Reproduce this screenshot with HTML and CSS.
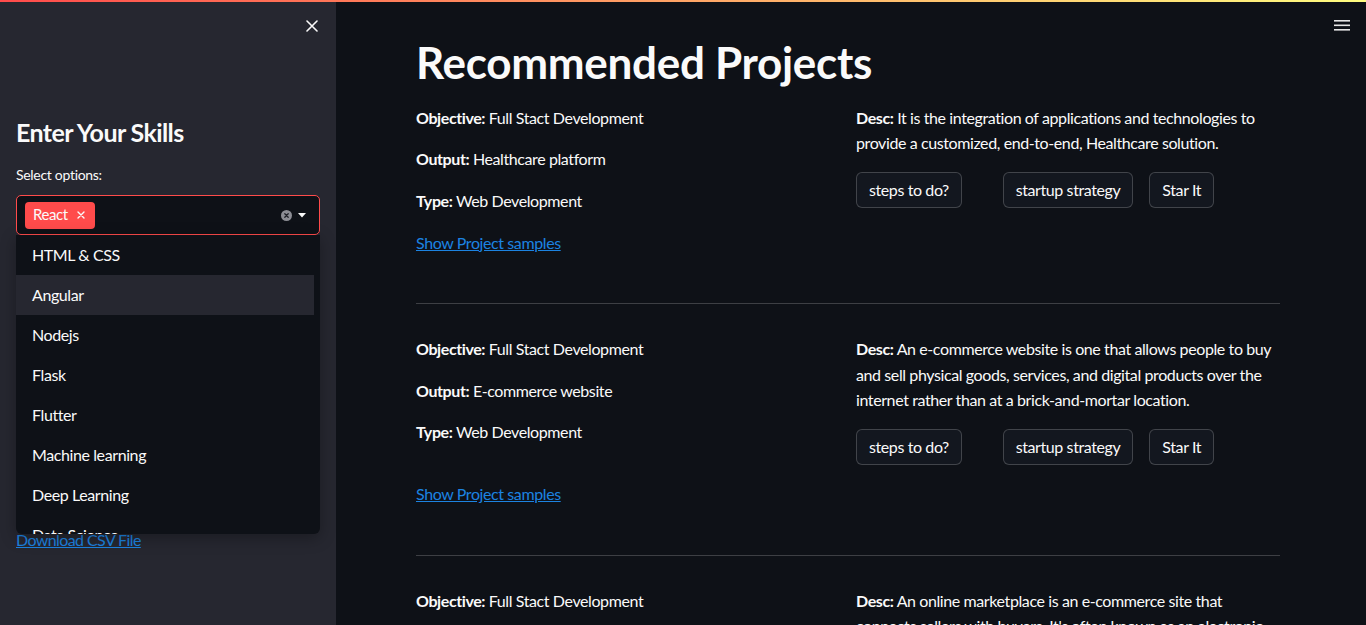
FILE: index.html
```html
<!DOCTYPE html>
<html lang="en">
<head>
<meta charset="utf-8">
<title>Recommended Projects</title>
<link rel="stylesheet" href="styles.css">
</head>
<body>
<div class="topbar"></div>
<div class="app">
  <aside class="sidebar">
    <div class="sb-header">
      <button class="icon-btn" aria-label="Close sidebar">
        <svg width="12" height="12" viewBox="0 0 12 12"><path d="M1 1L11 11M11 1L1 11" stroke="#fafafa" stroke-width="1.6" stroke-linecap="round"/></svg>
      </button>
    </div>
    <div class="sb-body">
      <h2 class="sb-title">Enter Your Skills</h2>
      <div class="field-label">Select options:</div>
      <div class="multiselect">
        <div class="ms-box">
          <span class="tag">React
            <svg width="8" height="8" viewBox="0 0 8 8"><path d="M1 1L7 7M7 1L1 7" stroke="#fafafa" stroke-width="1.4" stroke-linecap="round"/></svg>
          </span>
          <span class="ms-spacer"></span>
          <span class="ms-clear">
            <svg width="11" height="11" viewBox="0 0 11 11"><circle cx="5.5" cy="5.5" r="5.5" fill="#8c8d94"/><path d="M3.8 3.8L7.2 7.2M7.2 3.8L3.8 7.2" stroke="#1e2027" stroke-width="1.3" stroke-linecap="round"/></svg>
          </span>
          <span class="ms-arrow">
            <svg width="8" height="5" viewBox="0 0 8 5"><path d="M0 0H8L4 4.5Z" fill="#fafafa"/></svg>
          </span>
        </div>
        <ul class="ms-menu">
          <li>HTML &amp; CSS</li>
          <li class="active">Angular</li>
          <li>Nodejs</li>
          <li>Flask</li>
          <li>Flutter</li>
          <li>Machine learning</li>
          <li>Deep Learning</li>
          <li>Data Science</li>
          <li>Android</li>
        </ul>
      </div>
      <a class="dl-link" href="#">Download CSV File</a>
    </div>
  </aside>

  <main class="main">
    <button class="menu-btn" aria-label="Menu">
      <svg width="16" height="11" viewBox="0 0 16 11"><rect x="0" y="0" width="16" height="1.6" fill="#e6e6e6"/><rect x="0" y="4.5" width="16" height="1.6" fill="#e6e6e6"/><rect x="0" y="9" width="16" height="1.6" fill="#e6e6e6"/></svg>
    </button>
    <div class="content">
      <h1 class="title">Recommended Projects</h1>

      <section class="project">
        <div class="row">
          <div class="col">
            <p><b>Objective:</b> Full Stact Development</p>
            <p><b>Output:</b> Healthcare platform</p>
            <p><b>Type:</b> Web Development</p>
          </div>
          <div class="col">
            <p><b>Desc:</b> It is the integration of applications and technologies to provide a customized, end-to-end, Healthcare solution.</p>
            <div class="btns">
              <button class="btn">steps to do?</button>
              <button class="btn">startup strategy</button>
              <button class="btn">Star It</button>
            </div>
          </div>
        </div>
        <p class="samples"><a href="#">Show Project samples</a></p>
      </section>
      <hr class="divider">

      <section class="project">
        <div class="row">
          <div class="col">
            <p><b>Objective:</b> Full Stact Development</p>
            <p><b>Output:</b> E-commerce website</p>
            <p><b>Type:</b> Web Development</p>
          </div>
          <div class="col">
            <p><b>Desc:</b> An e-commerce website is one that allows people to buy and sell physical goods, services, and digital products over the internet rather than at a brick-and-mortar location.</p>
            <div class="btns">
              <button class="btn">steps to do?</button>
              <button class="btn">startup strategy</button>
              <button class="btn">Star It</button>
            </div>
          </div>
        </div>
        <p class="samples"><a href="#">Show Project samples</a></p>
      </section>
      <hr class="divider">

      <section class="project">
        <div class="row">
          <div class="col">
            <p><b>Objective:</b> Full Stact Development</p>
            <p><b>Output:</b> Online marketplace</p>
            <p><b>Type:</b> Web Development</p>
          </div>
          <div class="col">
            <p><b>Desc:</b> An online marketplace is an e-commerce site that connects sellers with buyers. It's often known as an electronic marketplace.</p>
            <div class="btns">
              <button class="btn">steps to do?</button>
              <button class="btn">startup strategy</button>
              <button class="btn">Star It</button>
            </div>
          </div>
        </div>
        <p class="samples"><a href="#">Show Project samples</a></p>
      </section>
    </div>
  </main>
</div>
</body>
</html>
```

FILE: styles.css
```css
* { box-sizing: border-box; }

html, body {
  margin: 0;
  height: 100%;
  overflow: hidden;
}

body {
  background: #0e1117;
  color: #fafafa;
  font-family: Lato, "Noto Sans", sans-serif;
  font-size: 16px;
  line-height: 25.6px;
  letter-spacing: -0.4px;
}

.topbar {
  height: 2px;
  background: linear-gradient(90deg, #ff4b4b, #fffd80);
}

.app {
  display: flex;
  height: calc(100% - 2px);
}

/* Sidebar */
.sidebar {
  width: 336px;
  flex: none;
  background: #262730;
  overflow: hidden;
}

.sb-header {
  display: flex;
  justify-content: flex-end;
  padding: 18px 18px 0 0;
}

.icon-btn {
  background: none;
  border: 0;
  padding: 0;
  display: block;
  line-height: 0;
}

.sb-body {
  padding: 85px 16px 0;
}

.sb-title {
  margin: 0;
  font-size: 25px;
  line-height: 30px;
  font-weight: 700;
  letter-spacing: -0.6px;
}

.field-label {
  margin-top: 17px;
  font-size: 14px;
  line-height: 22px;
  letter-spacing: -0.3px;
}

.multiselect {
  position: relative;
  margin-top: 9px;
}

.ms-box {
  height: 40px;
  border: 1px solid #ff4b4b;
  border-radius: 5px;
  background: #0e1117;
  display: flex;
  align-items: center;
  padding: 0 13px 0 8px;
}

.tag {
  background: #ff4b4b;
  border-radius: 4px;
  height: 27px;
  padding: 0 10px 0 8px;
  display: flex;
  align-items: center;
  gap: 9px;
  font-size: 15px;
}

.tag svg { display: block; }

.ms-spacer { flex: 1; }

.ms-clear, .ms-arrow {
  display: flex;
  align-items: center;
}

.ms-arrow { margin-left: 6px; }

.ms-menu {
  position: absolute;
  left: 0;
  right: 0;
  top: 100%;
  height: 299px;
  margin: 0;
  padding: 0 6px 0 0;
  list-style: none;
  background: #0e1117;
  border-radius: 0 0 6px 6px;
  overflow: hidden;
  box-shadow: 0 4px 16px rgba(0, 0, 0, 0.3);
  z-index: 2;
}

.ms-menu li {
  height: 40px;
  line-height: 39px;
  padding: 0 16px;
}

.ms-menu li.active { background: #262730; }

.dl-link {
  display: inline-block;
  margin-top: 292px;
  color: #1c83e1;
  text-decoration: underline;
  letter-spacing: -0.6px;
}

/* Main */
.main {
  flex: 1;
  position: relative;
  overflow: hidden;
}

.menu-btn {
  position: absolute;
  top: 18px;
  right: 16px;
  background: none;
  border: 0;
  padding: 0;
  line-height: 0;
}

.content {
  width: 864px;
  margin-left: 80px;
  padding-top: 34px;
}

.title {
  margin: 0 0 16px;
  font-size: 44px;
  line-height: 52.8px;
  font-weight: 700;
  letter-spacing: -0.3px;
}

.row {
  display: grid;
  grid-template-columns: 1fr 1fr;
  gap: 16px;
}

.col {
  display: flex;
  flex-direction: column;
  gap: 16px;
  min-width: 0;
}

.col p { margin: 0; }

.btns {
  display: grid;
  grid-template-columns: repeat(3, 1fr);
  gap: 16px;
}

.btn {
  justify-self: start;
  height: 36px;
  padding: 0 12px;
  border: 1px solid rgba(250, 250, 250, 0.2);
  border-radius: 6px;
  background: #13171f;
  color: #fafafa;
  font: inherit;
  letter-spacing: inherit;
  line-height: 34px;
  white-space: nowrap;
}

.samples { margin: 16px 0 0; }

.samples a {
  color: #1c83e1;
  text-decoration: underline;
}

.divider {
  margin: 48px 0 32px;
  border: 0;
  border-top: 1px solid rgba(250, 250, 250, 0.2);
  height: 0;
}
```
